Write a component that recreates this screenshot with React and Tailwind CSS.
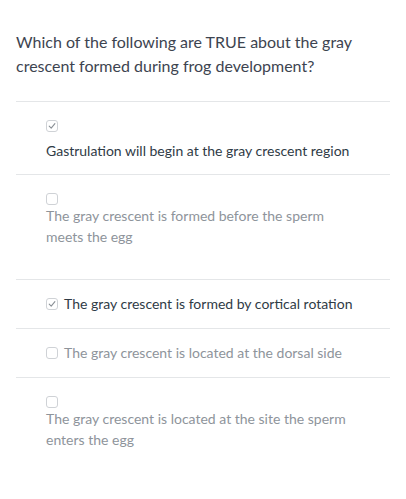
import { useState } from "react"

const options = [
  { text: "Gastrulation will begin at the gray crescent region", checked: true, layout: "stackedWide" },
  { text: "The gray crescent is formed before the sperm meets the egg", checked: false, layout: "stacked" },
  { text: "The gray crescent is formed by cortical rotation", checked: true, layout: "inline" },
  { text: "The gray crescent is located at the dorsal side", checked: false, layout: "inline" },
  { text: "The gray crescent is located at the site the sperm enters the egg", checked: false, layout: "stacked" },
]

function Box({ checked }) {
  return (
    <span className="flex h-[12px] w-[12px] shrink-0 items-center justify-center rounded-[3px] border border-[#cfd2d6] bg-white">
      {checked && (
        <svg width="8" height="8" viewBox="0 0 8 8" fill="none">
          <path d="M1.2 4.2 L3.2 6.1 L6.9 1.6" stroke="#8a9096" strokeWidth="1.1" strokeLinecap="round" strokeLinejoin="round" />
        </svg>
      )}
    </span>
  )
}

export default function App() {
  const [state, setState] = useState(options.map((o) => o.checked))

  const toggle = (i) => setState((s) => s.map((v, j) => (j === i ? !v : v)))

  return (
    <div className="min-h-[499px] bg-white px-4 pt-[30px] font-['Lato','Liberation_Sans',sans-serif]">
      <p className="text-[16px] leading-[24px] text-[#3d4450]">
        Which of the following are TRUE about the gray crescent formed during frog development?
      </p>

      <div className="mt-[23px] border-t border-[#e4e6e8]">
        {options.map((opt, i) => {
          const checked = state[i]
          const color = checked ? "text-[#2f3b46]" : "text-[#8e949b]"

          if (opt.layout === "inline") {
            return (
              <div
                key={i}
                onClick={() => toggle(i)}
                className={`flex items-center gap-[6px] border-b border-[#e4e6e8] py-[14px] pl-[30px] text-[14px] leading-[20px] ${color}`}
              >
                <Box checked={checked} />
                <span>{opt.text}</span>
              </div>
            )
          }

          const wide = opt.layout === "stackedWide"
          return (
            <div
              key={i}
              onClick={() => toggle(i)}
              className={`border-b border-[#e4e6e8] pl-[30px] pt-[18px] text-[14px] ${wide ? "pb-[13px]" : "pb-[32px]"} ${color} ${i === options.length - 1 ? "border-b-0" : ""}`}
            >
              <Box checked={checked} />
              <p className={`max-w-[310px] ${wide ? "mt-[9px] leading-[20px]" : "leading-[21px]"}`}>{opt.text}</p>
            </div>
          )
        })}
      </div>
    </div>
  )
}
